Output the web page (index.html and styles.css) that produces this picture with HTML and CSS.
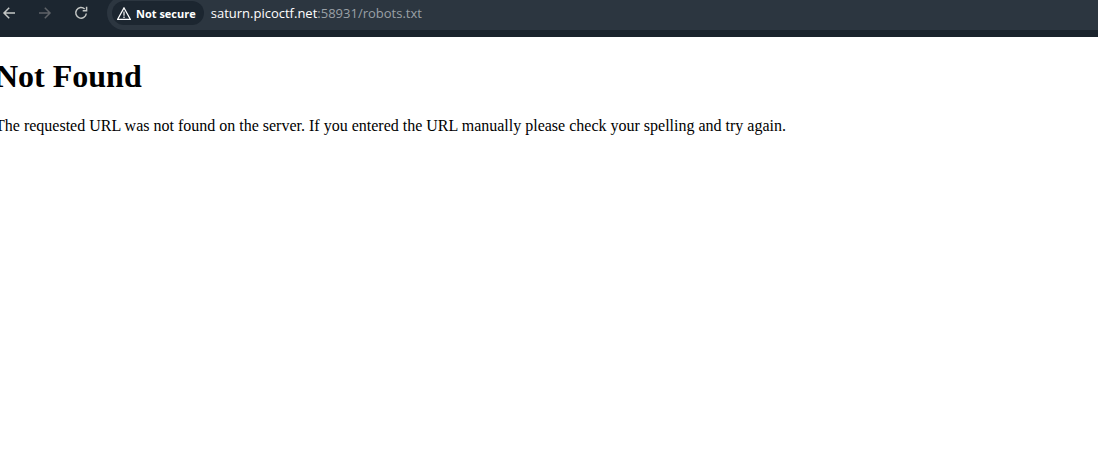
FILE: index.html
```html
<!DOCTYPE html>
<html lang="en">
<head>
<meta charset="utf-8">
<title>404 Not Found</title>
<link rel="stylesheet" href="styles.css">
</head>
<body>
<header class="chrome">
  <div class="toolbar">
    <svg class="nav-icon back" width="14" height="14" viewBox="0 0 14 14"><path d="M13 7H2.2M7.2 1.8L2 7l5.2 5.2" fill="none" stroke="#c4c7c5" stroke-width="1.5"/></svg>
    <svg class="nav-icon forward" width="14" height="14" viewBox="0 0 14 14"><path d="M1 7h10.8M6.8 1.8L12 7l-5.2 5.2" fill="none" stroke="#5f6368" stroke-width="1.5"/></svg>
    <svg class="nav-icon reload" width="14" height="14" viewBox="0 0 14 14"><path d="M12.3 7.5A5.3 5.3 0 1 1 10.7 3M12.6.8v3.9H8.7" fill="none" stroke="#c4c7c5" stroke-width="1.5"/></svg>
    <div class="omnibox">
      <div class="chip">
        <svg width="14" height="13" viewBox="0 0 14 13"><path d="M7 .9L.7 12.3h12.6zM7 4.4v4.3M7 9.6v1.4" fill="none" stroke="#fff" stroke-width="1.2"/></svg>
        <span>Not secure</span>
      </div>
      <div class="url"><span class="host">saturn.picoctf.net</span><span class="rest">:58931/robots.txt</span></div>
    </div>
  </div>
  <div class="strip"></div>
</header>
<main class="page">
  <h1>Not Found</h1>
  <p>The requested URL was not found on the server. If you entered the URL manually please check your spelling and try again.</p>
</main>
</body>
</html>
```

FILE: styles.css
```css
html, body { margin: 0; padding: 0; background: #fff; overflow: hidden; }
.chrome { height: 37px; display: flex; flex-direction: column; background: #1c2630; }
.toolbar { height: 30px; flex: none; display: flex; align-items: center; padding-left: 2px; overflow: hidden; }
.strip { height: 7px; background: #1a232c; }
.nav-icon { flex: none; margin-bottom: 4px; }
.forward, .reload { margin-left: 22px; }
.omnibox { display: flex; align-items: center; height: 34px; align-self: flex-end; flex: none; width: 991px; margin-left: 19px; background: #2c3640; border-radius: 17px 0 0 17px; font-family: "Open Sans", "Liberation Sans", sans-serif; }
.chip { display: flex; align-items: center; gap: 5px; height: 24px; margin-left: 5px; padding: 0 8px 0 5px; border-radius: 12px; background: #1c2630; color: #fff; font-size: 11px; font-weight: 700; }
.url { margin-left: 7px; font-size: 13px; }
.host { color: #fff; }
.rest { color: #9aa0a6; }
.page { margin-left: -5px; font-family: "Liberation Serif", "Times New Roman", serif; color: #000; }
h1 { margin: 21px 0 0; font-size: 32px; line-height: 37px; font-weight: 700; }
p { margin: 22px 0 0; font-size: 16px; line-height: 18px; white-space: nowrap; }
```
